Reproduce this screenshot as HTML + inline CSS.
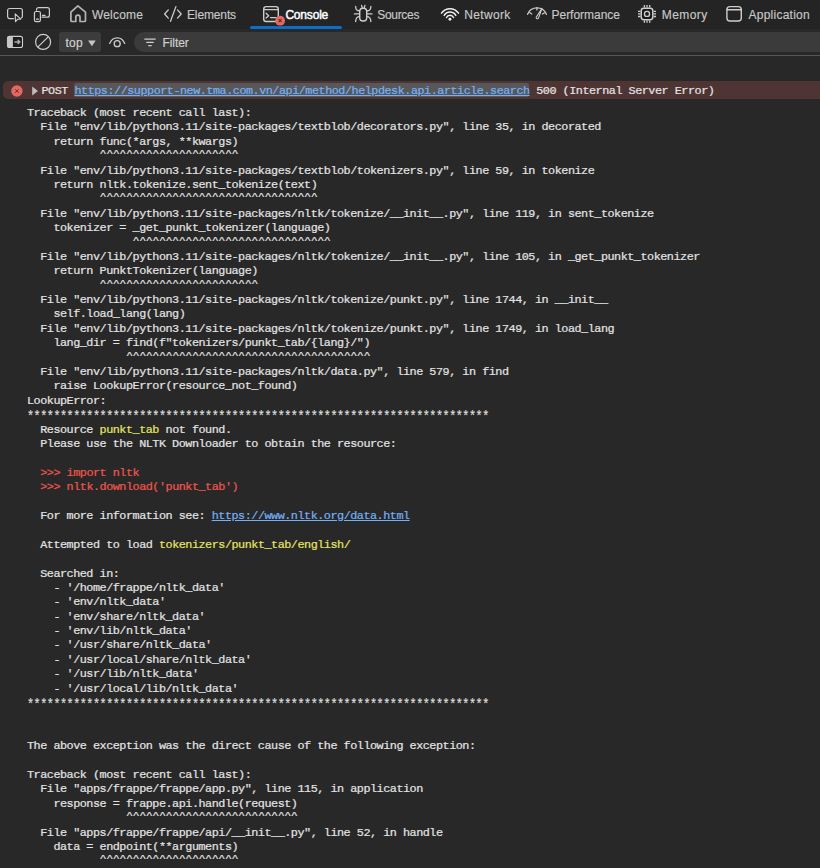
<!DOCTYPE html>
<html>
<head>
<meta charset="utf-8">
<title>DevTools Console</title>
<style>
html,body{margin:0;padding:0;}
body{width:820px;height:868px;overflow:hidden;background:#282828;position:relative;font-family:"Liberation Sans",sans-serif;}
#tabs{position:absolute;left:0;top:0;width:820px;height:29px;background:#242424;}
#tools{position:absolute;left:0;top:29px;width:820px;height:26px;background:#282828;}
#sep{position:absolute;left:0;top:55px;width:820px;height:1px;background:#565656;}
.tl{position:absolute;top:8px;height:14px;line-height:14px;font-size:12px;color:#c8c8c8;white-space:nowrap;-webkit-text-stroke:0.15px #c8c8c8;}
.tl.act{color:#ffffff;-webkit-text-stroke:0.45px #ffffff;}
svg{position:absolute;overflow:visible;z-index:5;}
.ic{fill:none;stroke:#c8c8c8;stroke-width:1.1;stroke-linecap:round;stroke-linejoin:round;}
#uline{position:absolute;left:250px;top:26px;width:92px;height:3px;border-radius:2px;background:#0a6fc9;}
#ctx{position:absolute;left:59px;top:32px;width:42px;height:20px;border-radius:3px;background:#3c3c3c;}
#filter{position:absolute;left:134px;top:32px;width:720px;height:20px;border-radius:10px;background:#3b3b3b;}
.tt{position:absolute;font-size:12px;line-height:14px;height:14px;white-space:nowrap;-webkit-text-stroke:0.2px;}
#con{position:absolute;left:0;top:56px;width:820px;height:812px;background:#282828;}
#erow{position:absolute;left:3px;top:81px;width:830px;height:18px;border-radius:5px 0 0 5px;background:#4e3534;}
#hl{position:absolute;left:74px;top:82.500px;width:455px;height:14.500px;border-radius:2px;background:#58585a;}
pre{position:absolute;margin:0;font-family:"Liberation Mono",monospace;font-size:11.8px;letter-spacing:-0.483px;line-height:14.39px;color:#e3e3e3;white-space:pre;-webkit-text-stroke:0.22px;}
#l0{left:41.5px;top:84px;}
#tb{left:27px;top:106px;}
a{color:#74b0f6;text-decoration:underline;}
.c{display:inline-block;transform-origin:50% 50%;transform:translateY(-1.800px) scaleY(0.75);}
.s{display:inline-block;transform-origin:50% 50%;transform:translateY(2.800px) scaleY(1.2);-webkit-text-stroke:0.100px;}
.y{color:#e3e562;}
.r{color:#f0554f;}
</style>
</head>
<body>
<div id="tabs">
  <div class="tl" style="left:92px;letter-spacing:0.17px">Welcome</div>
  <div class="tl" style="left:187px;letter-spacing:-0.13px">Elements</div>
  <div class="tl act" style="left:285.400px;letter-spacing:-0.19px">Console</div>
  <div id="uline"></div>
  <div class="tl" style="left:377.300px;letter-spacing:-0.32px">Sources</div>
  <div class="tl" style="left:464.300px;letter-spacing:0.33px">Network</div>
  <div class="tl" style="left:551.500px;letter-spacing:-0.02px">Performance</div>
  <div class="tl" style="left:661.800px;letter-spacing:0.42px">Memory</div>
  <div class="tl" style="left:748.500px;letter-spacing:0.25px">Application</div>
</div>
<div id="tools">
</div>
<div id="ctx"></div>
<div class="tt" style="left:65.500px;top:36px;color:#d0d0d0;letter-spacing:0.2px">top</div>
<div id="filter"></div>
<div class="tt" style="left:162.500px;top:36px;color:#cfcfcf;letter-spacing:-0.08px">Filter</div>
<div id="sep"></div>
<div id="con"></div>
<div id="erow"></div>
<div id="hl"></div>

<svg id="ov" width="820" height="104" viewBox="0 0 820 104" style="left:0;top:0">
<g fill="none" stroke="#cdcdcd" stroke-width="1.2" stroke-linecap="round" stroke-linejoin="round">
  <!-- inspect -->
  <path d="M13.600 18.550H9.600a2 2 0 0 1-2-2V10.500a2 2 0 0 1 2-2h10.800a2 2 0 0 1 2 2v5.800a2 2 0 0 1-1.300 1.900"/>
  <path d="M15.200 13.900l.3 7.800 2.200-2.500 3-.1z" stroke-width="1.100"/>
  <!-- device -->
  <path d="M36.550 10.200V9.600a2 2 0 0 1 2-2h8.850a2 2 0 0 1 2 2v5.600a2 2 0 0 1-2 2H42"/>
  <rect x="34.450" y="11.500" width="5.950" height="10.150" rx="1.600"/>
  <path d="M36.500 19.200h1.900M42.400 15.400h2.600"/>
  <!-- home -->
  <path d="M70.900 12.100l6.950-6.200 7.650 6.200v8.400a1 1 0 0 1-1 1H80v-4.300a2.100 2.100 0 0 0-4.200 0v4.300h-3.900a1 1 0 0 1-1-1z" stroke-width="1.700" stroke="#b4b4b4"/>
  <!-- elements -->
  <path d="M168.300 9.900L164.600 14l3.700 4.100M175.900 6.600l-5.400 14.700M177.500 9.900l3.700 4.100-3.700 4.100" stroke-width="1.300"/>
  <!-- console -->
  <rect x="263.700" y="6.650" width="14.600" height="14.850" rx="2.500" stroke-width="1.400"/>
  <path d="M263.700 9.700h14.600" stroke-width="1.300"/>
  <path d="M266.100 13.300l2.600 2.400-2.600 2.400M270.500 17.600h5.700" stroke-width="1.300"/>
  <!-- bug -->
  <rect x="359.700" y="8.300" width="7" height="12.700" rx="3.200" stroke-width="1.400"/>
  <path d="M362.200 7.600l-.6-2.300M364.300 7.600l.6-2.300M354.400 13.900h5.200M366.800 13.900h5.200M359.600 11c-2.500 0-3.900-1.600-3.950-4.500M366.900 11c2.500 0 3.900-1.600 3.950-4.500M359.600 16.600c-2.500 0-3.900 1.800-3.950 5M366.900 16.600c2.500 0 3.900 1.800 3.950 5" stroke-width="1.300"/>
  <!-- wifi -->
  <g stroke="#f0f0f0" stroke-width="1.500">
    <path d="M441.500 13.200a10.200 10.200 0 0 1 17 0M444.200 15.400a6.700 6.700 0 0 1 11.600 0M446.500 17.500a3.900 3.900 0 0 1 7 0"/>
  </g>
  <!-- performance -->
  <path d="M527.600 14.300a10.100 10.100 0 0 1 18.800 0" stroke-width="1.300"/>
  <path d="M536.900 7.600v2.300M529.700 12.600l2.100 1.400M544.500 12.800l-2.100 1.200" stroke-width="1.200"/>
  <path d="M542 8.400l-3.500 9.600a1.250 1.250 0 0 1-2.350-.8z" stroke-width="1.100"/>
  <!-- memory -->
  <rect x="641.200" y="8.200" width="11.600" height="11.500" rx="2.600" stroke-width="1.500" fill="#1a1a1a"/>
  <rect x="644.500" y="11.400" width="5" height="5" rx="2.200" stroke-width="1.400"/>
  <path d="M644.400 5.100v2.400M647 5.100v2.400M649.700 5.100v2.400M644.400 20.400v2.400M647 20.400v2.400M649.700 20.400v2.400M638 11.400h2.400M638 13.950h2.400M638 16.500h2.400M653.600 11.400h2.400M653.600 13.950h2.400M653.600 16.500h2.400" stroke-width="1.300" stroke-linecap="butt"/>
  <!-- application -->
  <rect x="726.900" y="6.650" width="14.400" height="14.400" rx="3" stroke-width="1.400"/>
  <path d="M726.900 9.750h14.400" stroke-width="1.400"/>
  <!-- sidebar toggle -->
  <rect x="7.500" y="36.400" width="15" height="11.100" rx="2" fill="#1c1c1c" stroke-width="1.100"/>
  <!-- clear -->
  <circle cx="43.100" cy="41.900" r="7.500"/>
  <path d="M38 46.900L48.200 36.900"/>
  <!-- eye -->
  <path d="M109.700 43.400c1.400-3.700 4-5.600 7.500-5.600s6.100 1.900 7.500 5.600" stroke-width="1.300"/>
  <circle cx="117.200" cy="43.700" r="3" stroke-width="1.300"/>
  <!-- filter -->
  <path d="M144.800 39.100h10.400M146.800 42.400h6.400M148.800 45.700h2.400" stroke-width="1.300"/>
</g>
<circle cx="449.950" cy="19.250" r="1.450" fill="#f0f0f0"/>
<path d="M7 38.400a2 2 0 0 1 2-2h3.900v11.100H9a2 2 0 0 1-2-2z" fill="#c6c6c6"/>
<path d="M14.500 41.950h4.600M17.600 39.800l2.300 2.150-2.300 2.150" fill="none" stroke="#aaaaaa" stroke-width="1.400"/>
<path d="M88.100 40.600h7.600l-3.800 5.600z" fill="#c8c8c8"/>
<!-- console badge -->
<circle cx="280.100" cy="20.700" r="4.900" fill="#e46962"/>
<path d="M278.600 19.200l3 3M281.600 19.200l-3 3" stroke="#5e2a27" stroke-width="1.100" fill="none"/>
<!-- error row icon + triangle -->
<circle cx="16.900" cy="91" r="5.700" fill="#e46962"/>
<path d="M15.100 89.200l3.600 3.600M18.700 89.200l-3.600 3.600" stroke="#6e2b27" stroke-width="1" fill="none"/>
<path d="M32.200 86.600L38 91l-5.800 4.400z" fill="#bdbdbd"/>
</svg>
<pre id="l0">POST <a>https://support-new.tma.com.vn/api/method/helpdesk.api.article.search</a> 500 (Internal Server Error)</pre>
<pre id="tb">Traceback (most recent call last):
  File "env/lib/python3.11/site-packages/textblob/decorators.py", line 35, in decorated
    return func(*args, **kwargs)
           <span class="c">^^^^^^^^^^^^^^^^^^^^^</span>
  File "env/lib/python3.11/site-packages/textblob/tokenizers.py", line 59, in tokenize
    return nltk.tokenize.sent_tokenize(text)
           <span class="c">^^^^^^^^^^^^^^^^^^^^^^^^^^^^^^^^^</span>
  File "env/lib/python3.11/site-packages/nltk/tokenize/__init__.py", line 119, in sent_tokenize
    tokenizer = _get_punkt_tokenizer(language)
                <span class="c">^^^^^^^^^^^^^^^^^^^^^^^^^^^^^^</span>
  File "env/lib/python3.11/site-packages/nltk/tokenize/__init__.py", line 105, in _get_punkt_tokenizer
    return PunktTokenizer(language)
           <span class="c">^^^^^^^^^^^^^^^^^^^^^^^^</span>
  File "env/lib/python3.11/site-packages/nltk/tokenize/punkt.py", line 1744, in __init__
    self.load_lang(lang)
  File "env/lib/python3.11/site-packages/nltk/tokenize/punkt.py", line 1749, in load_lang
    lang_dir = find(f"tokenizers/punkt_tab/{lang}/")
               <span class="c">^^^^^^^^^^^^^^^^^^^^^^^^^^^^^^^^^^^^^</span>
  File "env/lib/python3.11/site-packages/nltk/data.py", line 579, in find
    raise LookupError(resource_not_found)
LookupError: 
<span class="s">**********************************************************************</span>
  Resource <span class="y">punkt_tab</span> not found.
  Please use the NLTK Downloader to obtain the resource:

  <span class="r">&gt;&gt;&gt; import nltk</span>
  <span class="r">&gt;&gt;&gt; nltk.download('punkt_tab')</span>
  
  For more information see: <a>https://www.nltk.org/data.html</a>

  Attempted to load <span class="y">tokenizers/punkt_tab/english/</span>

  Searched in:
    - '/home/frappe/nltk_data'
    - 'env/nltk_data'
    - 'env/share/nltk_data'
    - 'env/lib/nltk_data'
    - '/usr/share/nltk_data'
    - '/usr/local/share/nltk_data'
    - '/usr/lib/nltk_data'
    - '/usr/local/lib/nltk_data'
<span class="s">**********************************************************************</span>


The above exception was the direct cause of the following exception:

Traceback (most recent call last):
  File "apps/frappe/frappe/app.py", line 115, in application
    response = frappe.api.handle(request)
               <span class="c">^^^^^^^^^^^^^^^^^^^^^^^^^^</span>
  File "apps/frappe/frappe/api/__init__.py", line 52, in handle
    data = endpoint(**arguments)
           <span class="c">^^^^^^^^^^^^^^^^^^^^^</span>
</pre>
</body>
</html>
